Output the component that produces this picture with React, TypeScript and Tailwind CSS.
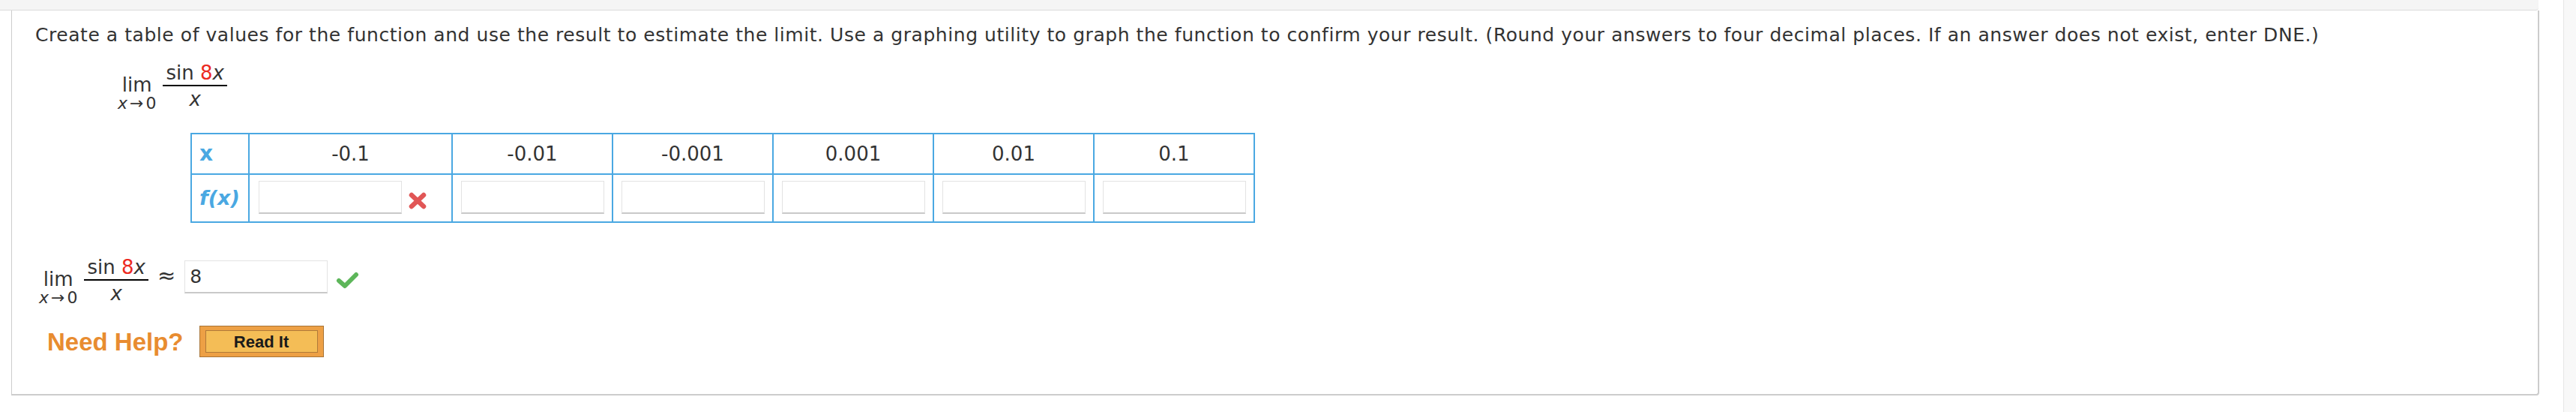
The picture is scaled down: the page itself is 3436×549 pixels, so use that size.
import React from 'react'

const XS = [-0.1, -0.01, -0.001, 0.001, 0.01, 0.1]

function Field({ value = '', className = '' }: { value?: string; className?: string }) {
  return (
    <div
      className={`h-[44px] w-[191px] bg-white border border-[#e3e3e3] border-b-2 border-b-[#c9c9c9] pl-[6px] flex items-center text-[25px] text-[#333] ${className}`}
    >
      {value}
    </div>
  )
}

function WrongMark() {
  return (
    <svg width="26" height="25" viewBox="0 0 26 25" className="shrink-0">
      <g stroke="#e15656" strokeWidth="6.5" strokeLinecap="round">
        <line x1="5" y1="5" x2="21" y2="20" />
        <line x1="21" y1="5" x2="5" y2="20" />
      </g>
    </svg>
  )
}

function RightMark() {
  return (
    <svg width="31" height="25" viewBox="0 0 31 25" className="shrink-0">
      <polyline
        points="4,13 12,20 27,5"
        fill="none"
        stroke="#5db65a"
        strokeWidth="6"
        strokeLinecap="round"
        strokeLinejoin="round"
      />
    </svg>
  )
}

// lim x->0 (sin 8x)/x
function Limit() {
  return (
    <div className="flex items-start text-[26px] leading-[26px] text-[#333]">
      <div className="mt-[16px] flex flex-col items-center">
        <span>lim</span>
        <span className="text-[22px] leading-[24px] whitespace-nowrap">
          <i>x</i>
          <span className="px-[3px]">→</span>0
        </span>
      </div>
      <div className="ml-[9px] flex flex-col items-center">
        <span className="px-[4px] whitespace-nowrap">
          sin <span className="text-[#ec2a22]">8</span>
          <i>x</i>
        </span>
        <div className="mt-[3px] h-[2px] w-full bg-black" />
        <i className="mt-[4px]">x</i>
      </div>
    </div>
  )
}

export default function App() {
  return (
    <div
      className="flex h-[549px] w-[3436px] overflow-hidden bg-white text-[#333]"
      style={{ fontFamily: '"DejaVu Sans", Verdana, sans-serif' }}
    >
      <div className="flex w-[3387px] shrink-0 flex-col">
        <div className="h-[14px] w-[3386px] rounded-br-[4px] border-b border-[#dcdcdc] bg-[#f5f5f5]" />
        <div className="flex">
          <div className="w-[15px] shrink-0" />
          <div className="flex h-[513px] w-[3372px] flex-col rounded-br-[4px] border-b-2 border-l border-r-2 border-[#cccccc] pl-[31px] pt-[18px]">
            <p className="text-[25px] leading-[30px] tracking-[0.55px] whitespace-nowrap">
              Create a table of values for the function and use the result to estimate the limit. Use a graphing
              utility to graph the function to confirm your result. (Round your answers to four decimal places. If an
              answer does not exist, enter DNE.)
            </p>

            <div className="ml-[110px] mt-[22px]">
              <Limit />
            </div>

            <div className="ml-[207px] mt-[27px] grid w-[1420px] grid-cols-[75px_269px_212px_212px_212px_212px_212px] grid-rows-[52px_62px] gap-[2px] bg-[#4aa8e2] p-[2px] text-[26px]">
              <div className="flex items-center bg-white pl-[10px] text-[28px] font-bold text-[#4aa8e2]">x</div>
              {XS.map(v => (
                <div key={v} className="flex items-center justify-center bg-white">
                  {v}
                </div>
              ))}
              <div className="flex items-center bg-white pl-[10px] text-[27px] font-bold italic text-[#4aa8e2]">f(x)</div>
              <div className="flex items-start bg-white pl-[12px] pt-[8px]">
                <Field />
                <div className="ml-[8px] mt-[14px]">
                  <WrongMark />
                </div>
              </div>
              {XS.slice(1).map(v => (
                <div key={v} className="flex items-start justify-center bg-white pt-[8px]">
                  <Field />
                </div>
              ))}
            </div>

            <div className="ml-[5px] mt-[46px] flex items-start">
              <Limit />
              <span className="ml-[12px] mt-[10px] text-[29px] leading-[29px]">≈</span>
              <Field value="8" className="ml-[12px] mt-[4px]" />
              <div className="ml-[11px] mt-[18px]">
                <RightMark />
              </div>
            </div>

            <div className="ml-[16px] mt-[25px] flex items-center" style={{ fontFamily: '"Liberation Sans", Arial, sans-serif' }}>
              <span className="text-[33px] leading-[33px] font-bold text-[#e88c30]">Need Help?</span>
              <div className="ml-[21px] h-[42px] w-[166px] border border-[#a87436] bg-[#eda045] px-[7px] py-[5px]">
                <div className="flex h-full w-full items-center justify-center border border-[#b07a3a] bg-[#f4bd56] text-[22px] font-bold text-[#1a1a1a]">
                  Read It
                </div>
              </div>
            </div>
          </div>
        </div>
      </div>
      <div className="w-[32px] shrink-0 bg-white" />
      <div className="w-px shrink-0 bg-[#e6e6e6]" />
      <div className="flex-1 bg-[#f8f8f8]" />
    </div>
  )
}
